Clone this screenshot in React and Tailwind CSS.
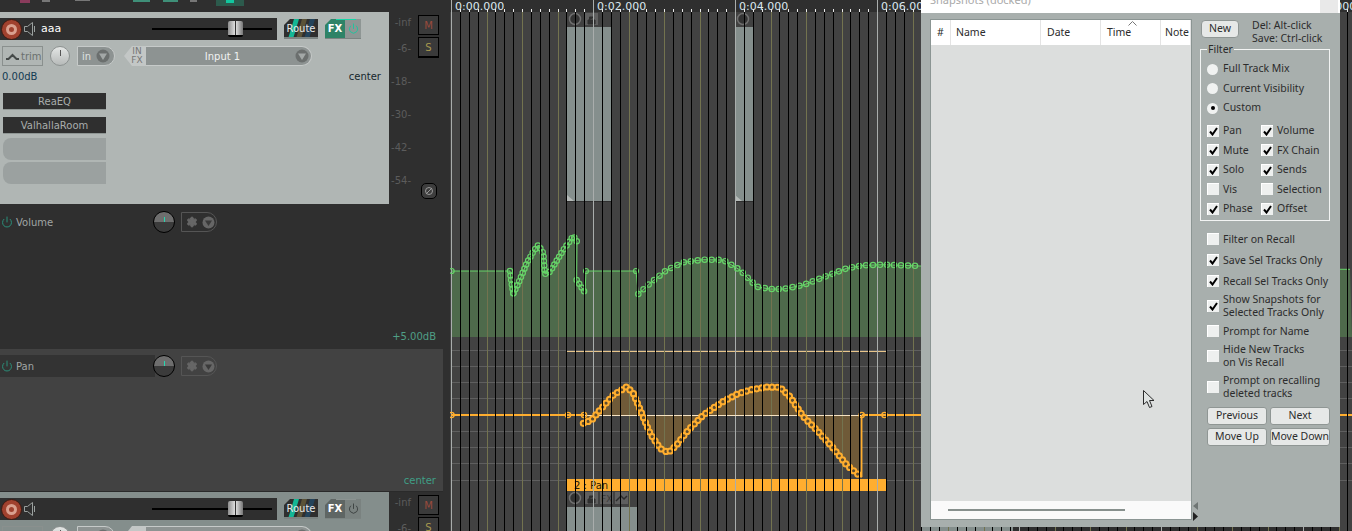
import React from "react";
import { Settings, Power } from "lucide-react";

const GRID = Array.from({ length: 103 }, (_, k) => ({ k, x: Math.floor(451.5 + k * 8.875) - 450 + 0.5 }));

// envelope points, read off the picture
const toVol = (p) => [p[0] / 3, 220 + p[1] / 3];
const toPan = (p) => [p[0] / 3, 340 + p[1] / 3];

const volRuns = [
  [[180, 153], [184, 185], [190, 220]],
  [[190, 220], [205, 190], [230, 130], [250, 95], [265, 75], [280, 100], [282, 130], [285, 162], [300, 155], [340, 90], [370, 48], [381, 65]],
  [[380, 180], [405, 218]],
  [[565, 222], [600, 190], [650, 150], [700, 127], [760, 119], [820, 120], [870, 150], [920, 200], [960, 207], [1000, 207], [1060, 195], [1130, 168], [1190, 145], [1240, 136], [1300, 134], [1410, 138]],
];
const volLine = [[5, 153], ...volRuns[0], ...volRuns[1], ...volRuns[2], [408, 153], [558, 153], ...volRuns[3], [2700, 148]].map(toVol);

const panCurve = [[400, 250], [425, 240], [450, 210], [490, 165], [530, 140], [550, 160], [575, 220], [600, 280], [630, 325], [655, 338], [680, 315], [715, 270], [760, 225], [815, 187], [860, 163], [900, 150], [950, 141], [990, 142], [1020, 170], [1060, 230], [1100, 270], [1150, 325], [1190, 375], [1235, 412]];

const spaced = (pts, gap) => {
  const out = [pts[0]];
  let left = gap;
  for (let i = 1; i < pts.length; i++) {
    const [x0, y0] = pts[i - 1];
    const [x1, y1] = pts[i];
    const len = Math.hypot(x1 - x0, y1 - y0);
    let d = left;
    while (d <= len) {
      out.push([x0 + ((x1 - x0) * d) / len, y0 + ((y1 - y0) * d) / len]);
      d += gap;
    }
    left = d - len;
  }
  return out;
};

const str = (pts) => pts.map((p) => p.join(",")).join(" ");
const panPts = panCurve.map(toPan);

const DropDot = ({ className }) => (
  <svg width="14" height="14" viewBox="0 0 14 14" className={className}>
    <circle cx="7" cy="7" r="6.5" fill="#6b6f6e" />
    <path d="M3 4.5h8L7 11z" fill="#a3a8a7" />
  </svg>
);

const Knob = ({ light }) =>
  light ? (
    <div className="w-[20px] h-[20px] rounded-full border border-[#8d9291] bg-linear-to-b from-[#e4e6e5] to-[#b6bab9] flex justify-center pt-[3px]">
      <div className="w-px h-[6px] bg-[#555]" />
    </div>
  ) : (
    <div className="w-[22px] h-[22px] rounded-full border border-black bg-linear-to-b from-[#6e6e6e] from-50% to-[#3b3b3b] to-50% flex justify-center pt-[5px] shrink-0">
      <div className="w-px h-[5px] bg-[#25d8b0]" />
    </div>
  );

const Fader = () => (
  <div className="absolute left-[152px] top-0 w-[120px] h-full flex items-center">
    <div className="w-full h-[2px] bg-black" />
    <div className="absolute left-[76px] top-[3px] w-[15px] h-[16px] rounded-[2px] bg-linear-to-r from-[#8e8e8e] via-[#e6e6e6] to-[#777] border-b-2 border-black flex justify-center">
      <div className="w-px h-full bg-[#333]" />
    </div>
  </div>
);

const Track = ({ name, panel, active, height, compact }) => (
  <div className={`flex shrink-0 ${height}`}>
    <div className={`w-[389px] pt-[6px] ${panel}`}>
      <div className="flex h-[22px]">
        <div className="relative w-[277px] h-full bg-[#2f2f2f]">
          <div className="absolute left-[1px] top-[1px] w-[21px] h-[21px] rounded-full bg-[#a0412e] border border-[#3c1a12] flex items-center justify-center">
            <div className="w-[11px] h-[11px] rounded-full border-[3px] border-[#d9a08f] bg-[#a0412e]" />
          </div>
          <svg width="12" height="14" viewBox="0 0 12 14" className="absolute left-[24px] top-[4px]">
            <path d="M.5 4.5h3l5-4v13l-5-4h-3zM10.5 4v6" fill="none" stroke="#9aa09e" />
          </svg>
          <span className="absolute left-[41px] top-[3px] text-[11px] leading-[16px] text-white font-['DejaVu_Sans',sans-serif]">{name}</span>
          <Fader />
        </div>
        <div className="relative ml-[7px] mt-[1px] w-[34px] h-[20px] bg-[#2f2f2f] border-b-2 border-[#7c8482] [clip-path:polygon(6px_0,100%_0,100%_100%,0_100%,0_6px)] overflow-hidden flex items-center justify-center">
          <svg width="34" height="20" viewBox="0 0 34 20" className="absolute left-0 top-0">
            <path d="M10 0h5l-6 20H4z" fill="#14b795" />
            <path d="M18 0h5l-6 20h-5z" fill="#5b5338" />
            <path d="M26 0h5l-6 20h-5z" fill="#24435a" />
          </svg>
          <span className="relative text-[10px] text-[#e8e8e8] font-['DejaVu_Sans',sans-serif]">Route</span>
        </div>
        <div className="relative ml-[7px] mt-[1px] w-[36px] h-[20px] flex border-b border-[#7c8482] [clip-path:polygon(6px_0,100%_0,100%_100%,0_100%,0_6px)] overflow-hidden">
          <div className={`w-[20px] h-full flex items-center justify-center text-[10px] font-bold text-white font-['DejaVu_Sans',sans-serif] ${active ? "bg-[#2e8367]" : "bg-[#5f6664]"}`}>FX</div>
          <div className={`flex-1 flex items-center justify-center ${active ? "bg-[#8e9694]" : "bg-[#7a8280]"}`}>
            <Power size={11} color={active ? "#19c79f" : "#3a3f3e"} />
          </div>
          <div className={`absolute left-[11px] top-0 w-[20px] h-px ${active ? "bg-[#18d6a8]" : "bg-[#8b9391]"}`} />
        </div>
      </div>
      <div className="flex items-center h-[20px] mt-[6px] font-['DejaVu_Sans',sans-serif]">
        <div className="ml-[2px] w-[41px] h-full border border-[#8a908e] flex items-center gap-[2px] pl-[3px] text-[10px] text-[#6a706e]">
          <svg width="13" height="7" viewBox="0 0 13 7"><path d="M0 6h2.5l4-4 4 4H13" fill="none" stroke="#454a49" strokeWidth="2" /></svg>
          {!compact && "trim"}
        </div>
        <div className="ml-[7px]"><Knob light /></div>
        <div className="ml-[7px] w-[38px] h-full bg-[#8d9392] border border-[#c6cac9] rounded-r-[10px] flex items-center justify-between px-[4px] text-[10px] text-[#dfe2e1]">
          {compact ? <span /> : "in"}
          <DropDot />
        </div>
        <div className="ml-[9px] w-[22px] h-full bg-[#c3c7c6] [clip-path:polygon(0_50%,8px_0,100%_0,100%_100%,8px_100%)] flex flex-col items-center pl-[4px] text-[9px] leading-[9px] text-[#777] pt-[1px]">
          {!compact && <span>IN</span>}
          {!compact && <span>FX</span>}
        </div>
        <div className="relative w-[166px] h-full bg-[#8d9392] border-y border-r border-[#c6cac9] rounded-r-[10px] flex items-center justify-center pr-[12px] text-[10px] text-[#f0f2f1]">
          {!compact && "Input 1"}
          <DropDot className="absolute right-[2px] top-[2px]" />
        </div>
      </div>
      {!compact && (
        <>
          <div className="flex justify-between h-[12px] mt-[5px] pl-[2px] pr-[8px] text-[10px] leading-[12px] font-['DejaVu_Sans',sans-serif]">
            <span className="text-[#123a52]">0.00dB</span>
            <span className="text-[#16262c]">center</span>
          </div>
          <div className="ml-[3px] mt-[10px] w-[103px] font-['DejaVu_Sans',sans-serif] text-[10px] text-[#a9adac]">
            <div className="h-[17px] bg-[#2f2f2f] border-b border-[#8f9694] flex items-center justify-center">ReaEQ</div>
            <div className="h-[17px] mt-[7px] bg-[#2f2f2f] border-b border-[#8f9694] flex items-center justify-center">ValhallaRoom</div>
            <div className="h-[22px] mt-[4px] bg-[#9ba1a0] rounded-l-[8px]" />
            <div className="h-[22px] mt-[2px] bg-[#9ba1a0] rounded-l-[8px]" />
          </div>
        </>
      )}
    </div>
    <div className="w-[61px] flex font-['DejaVu_Sans',sans-serif]">
      <div className="w-[22px] pt-[5px] flex flex-col items-end text-[10px] leading-[12px] text-[#5c5c5c]">
        <span className="h-[26px]">-inf</span>
        <span className="h-[33px]">-6-</span>
        {!compact && <span className="h-[33px]">-18-</span>}
        {!compact && <span className="h-[33px]">-30-</span>}
        {!compact && <span className="h-[33px]">-42-</span>}
        {!compact && <span>-54-</span>}
      </div>
      <div className="ml-[7px] pt-[3px] flex flex-col items-center w-[21px]">
        <div className="w-[21px] h-[20px] bg-[#3a3a3a] border border-black flex items-center justify-center text-[10px] text-[#9a4a3c]">M</div>
        <div className="w-[21px] h-[21px] mt-[2px] bg-[#3a3a3a] border border-black border-b-2 flex items-center justify-center text-[10px] text-[#a8984e]">S</div>
        <div className="mt-[125px] w-[16px] h-[16px] rounded-[5px] bg-[#3d3d3d] border border-black flex items-center justify-center">
          <svg width="10" height="10" viewBox="0 0 10 10"><circle cx="5" cy="5" r="3.5" fill="none" stroke="#999" /><path d="M2 8l6-6" stroke="#999" /></svg>
        </div>
      </div>
    </div>
  </div>
);

const LaneHead = ({ name, strip }) => (
  <div className="flex items-center h-[22px]">
    <div className={`w-[155px] h-full flex items-center pl-[1px] gap-[3px] ${strip}`}>
      <Power size={12} color="#2b8f7a" />
      <span className="text-[10px] text-[#a0a5a4] font-['DejaVu_Sans',sans-serif]">{name}</span>
    </div>
    <div className="-ml-[2px]"><Knob /></div>
    <div className="ml-[6px] w-[36px] h-[20px] border border-[#555] rounded-r-[10px] flex items-center justify-between pl-[4px] pr-[1px]">
      <Settings size={12} color="#666" fill="#666" />
      <svg width="13" height="13" viewBox="0 0 13 13"><circle cx="6.5" cy="6.5" r="6" fill="#666" /><path d="M3 4.5h7L6.5 10z" fill="#3a3a3a" /></svg>
    </div>
  </div>
);

const TrackPanel = () => (
  <div className="w-[450px] h-full shrink-0 flex flex-col bg-[#2f2f2f]">
    <div className="h-[12px] shrink-0 flex">
      <div className="ml-[20px] w-[10px] h-[3px] bg-[#8a3c5c]" />
      <div className="ml-[12px] w-[8px] h-[2px] bg-[#777]" />
      <div className="ml-[25px] w-[15px] h-[1px] bg-[#777]" />
      <div className="ml-[43px] w-[17px] h-[2px] bg-[#3f8f78]" />
      <div className="ml-[13px] w-[15px] h-[2px] bg-[#3f8f78]" />
      <div className="ml-[12px] w-[7px] h-[2px] bg-[#777]" />
      <div className="ml-[19px] w-[28px] h-[6px] bg-[#2c5a4c] flex justify-center">
        <div className="w-[8px] h-[3px] bg-[#12c79f]" />
      </div>
    </div>
    <Track name="aaa" panel="bg-[#b0b6b4]" active height="h-[192px]" />
    <div className="w-[443px] h-[145px] shrink-0 flex flex-col justify-between pt-[7px] pb-[6px] pr-[7px]">
      <LaneHead name="Volume" strip="" />
      <span className="self-end text-[10px] leading-[12px] text-[#4f9f86] font-['DejaVu_Sans',sans-serif]">+5.00dB</span>
    </div>
    <div className="w-[443px] h-[143px] shrink-0 bg-[#424242] flex flex-col justify-between pt-[6px] pb-[4px] pr-[7px] border-b border-[#2a2a2a]">
      <LaneHead name="Pan" strip="bg-[#333333]" />
      <span className="self-end text-[10px] leading-[12px] text-[#3f9f86] font-['DejaVu_Sans',sans-serif]">center</span>
    </div>
    <Track name="" panel="bg-[#848e8c]" height="h-[192px]" compact />
  </div>
);

const ItemHead = ({ x, y, w, lock, more }) => (
  <g>
    <rect x={x} y={y} width={w} height={15} fill="#414141" />
    <circle cx={x + 8} cy={y + 7} r={5.5} fill="#333" stroke="#6f6f6f" strokeWidth="1.5" />
    {lock && <rect x={x + 18} y={y + 1} width={13} height={12} fill="#5f5f5f" />}
    {lock && <path d={`M${x + 21} ${y + 12}v-4h7v4zM${x + 22.5} ${y + 8}v-3h4v1`} fill="#2f2f2f" stroke="#2f2f2f" />}
    {more && <rect x={x + 33} y={y + 1} width={13} height={12} fill="#5f5f5f" />}
    {more && <text x={x + 34} y={y + 11} fontSize="9" fill="#3a3a3a" fontFamily="DejaVu Sans">FX</text>}
    {more && <rect x={x + 48} y={y + 1} width={13} height={12} fill="#5f5f5f" />}
    {more && <path d={`M${x + 49} ${y + 10}l5-5 3 3 3-3`} fill="none" stroke="#2b2b2b" strokeWidth="1.5" />}
  </g>
);

const ArrangeArt = () => (
  <svg width="902" height="519" viewBox="0 12 902 519" className="block">
    <rect x="0" y="12" width="902" height="519" fill="#424242" />
    {[350, 366, 382, 398, 431, 447, 463, 480].map((y) => (
      <line key={y} x1="1" x2="902" y1={y + 0.5} y2={y + 0.5} stroke="#5f5f5f" shapeRendering="crispEdges" />
    ))}
    <ItemHead x={117} y={12} w={45} lock />
    <rect x="117" y="27" width="45" height="174" fill="#858f8d" />
    <path d="M117 195l7 6h-7z" fill="#b5bab8" />
    <rect x="117" y="201" width="45" height="1" fill="#2f2f2f" />
    <ItemHead x={285} y={12} w={19} />
    <rect x="285" y="27" width="19" height="174" fill="#858f8d" />
    <path d="M285 195l7 6h-7z" fill="#b5bab8" />
    <rect x="285" y="201" width="19" height="1" fill="#2f2f2f" />

    <polygon points={`1,337 ${str(volLine)} 902,337`} fill="#4e6a4b" />

    <polygon points={`${panPts[0][0]},415.5 ${str(panPts)} ${panPts[panPts.length - 1][0]},415.5`} fill="#6f5a38" />
    <rect x="117" y="479" width="319" height="12" fill="#ffae2f" />
    <line x1="117" x2="436" y1="351.5" y2="351.5" stroke="#e8c58a" shapeRendering="crispEdges" />
    <text x="124" y="489" fontSize="10" fill="#2a1a04" fontFamily="DejaVu Sans">2 : Pan</text>
    <ItemHead x={117} y={491} w={70} lock more />
    <rect x="117" y="507" width="70" height="24" fill="#858f8d" />
    <rect x="471" y="527" width="92" height="4" fill="#848e8c" />
    <rect x="563" y="527" width="327" height="4" fill="#2f2f2f" />

    {GRID.filter((g) => g.k % 4 === 0).map((g) => (
      <line key={g.k} x1={g.x} x2={g.x} y1="12" y2="531" stroke={g.k % 16 === 0 ? "#a9adac" : "#73734f"} shapeRendering="crispEdges" />
    ))}

    <polyline points={str(volLine)} fill="none" stroke="#66d468" />
    {[[5, 153], [408, 153], [558, 153]].map(toVol).map(([x, y], i) => (
      <circle key={i} cx={x} cy={y} r="2.5" fill="none" stroke="#66d468" strokeWidth="1.2" />
    ))}
    {volRuns.map((run, i) =>
      spaced(run.map(toVol), i === 3 ? 7 : 4.5).map(([x, y], j) => (
        <circle key={`${i}-${j}`} cx={x} cy={y} r="2.7" fill="none" stroke="#66d468" strokeWidth="1.2" />
      ))
    )}

    <line x1="1" x2="135" y1="415" y2="415" stroke="#ffae2f" strokeWidth="2" />
    <line x1="135" x2="412" y1="415.5" y2="415.5" stroke="#f6e2c2" />
    <line x1="412" x2="902" y1="415" y2="415" stroke="#ffae2f" strokeWidth="2" />
    <line x1="411.7" x2="411.7" y1="415" y2="477" stroke="#ffae2f" strokeWidth="1.5" />
    <polyline points={str(panPts)} fill="none" stroke="#ffae2f" strokeWidth="1.5" />
    {[[1.5, 415], [118, 415], [134, 415], [411.7, 415], [434.5, 415]].map(([x, y], i) => (
      <circle key={i} cx={x} cy={y} r="2.6" fill="none" stroke="#ffae2f" strokeWidth="1.4" />
    ))}
    {spaced(panPts, 5.2).map(([x, y], i) => (
      <circle key={i} cx={x} cy={y} r="2.6" fill="#5e4c2e" stroke="#ffae2f" strokeWidth="2" />
    ))}

    {GRID.filter((g) => g.k % 4 !== 0).map((g) => (
      <line key={g.k} x1={g.x} x2={g.x} y1="12" y2="531" stroke="#000" shapeRendering="crispEdges" />
    ))}
  </svg>
);

const Ruler = () => (
  <div className="relative h-[12px] bg-[#2f2f2f] flex text-[11px] leading-[14px] text-[#dbe7ee] font-['DejaVu_Sans',sans-serif] overflow-hidden">
    {["0:00.000", "0:02.000", "0:04.000", "0:06.000", "0:08.000", "0:10.000", "0:12.000"].map((t) => (
      <div key={t} className="w-[142px] shrink-0 pl-[5px]">{t}</div>
    ))}
    <svg width="902" height="12" className="absolute left-0 top-0">
      {GRID.map((g) => (
        <line key={g.k} x1={g.x} x2={g.x} y1={g.k % 16 === 0 ? 0 : 9} y2="12" stroke={g.k % 16 === 0 ? "#a9adac" : "#e8e8e8"} shapeRendering="crispEdges" />
      ))}
    </svg>
  </div>
);

const Box = ({ checked }) => (
  <div className="w-[12px] h-[12px] shrink-0 bg-[#eef0ef] border-t border-l border-white flex items-center justify-center">
    {checked && (
      <svg width="9" height="9" viewBox="0 0 9 9"><path d="M1 4.5l2.5 3L8 1" fill="none" stroke="#000" strokeWidth="2" /></svg>
    )}
  </div>
);

const Check = ({ label, checked, className = "" }) => (
  <div className={`flex items-center gap-[4px] whitespace-nowrap ${className}`}>
    <Box checked={checked} />
    <span className="leading-[13px]">{label}</span>
  </div>
);

const Radio = ({ label, on }) => (
  <div className="flex items-center gap-[5px] h-[14px]">
    <div className="w-[11px] h-[11px] rounded-full bg-[#f0f2f1] flex items-center justify-center">
      {on && <div className="w-[4px] h-[4px] rounded-full bg-black" />}
    </div>
    {label}
  </div>
);

const Btn = ({ children, className = "" }) => (
  <div className={`h-[18px] whitespace-nowrap bg-[#e6e8e7] border border-[#8f9694] rounded-[3px] flex items-center justify-center ${className}`}>{children}</div>
);

const columns = [
  ["#", "w-[20px] justify-center"],
  ["Name", "w-[90px] pl-[5px]"],
  ["Date", "w-[60px] pl-[6px]"],
  ["Time", "w-[60px] pl-[6px]"],
  ["Note", "flex-1 pl-[4px]"],
];

const SnapshotWindow = () => (
  <div className="absolute left-[471px] top-0 w-[419px] h-[527px] bg-[#a8afad] flex flex-col font-['Noto_Sans',sans-serif] text-[10.5px] text-[#2c2c2c]">
    <div className="h-[13px] shrink-0 flex bg-white overflow-hidden">
      <span className="ml-[9px] -mt-[7px] text-[11px] leading-[14px] text-[#a9a9a9]">Snapshots (docked)</span>
      <div className="ml-auto mr-[2px] w-[18px] h-full bg-[#e9e9e9]" />
    </div>
    <div className="flex pt-[6px] pl-[9px]">
      <div className="w-[262px] h-[501px] shrink-0 border border-[#8b9593] flex flex-col bg-[#dcdedd]">
        <div className="relative h-[25px] shrink-0 flex bg-white">
          {columns.map(([t, c]) => (
            <div key={t} className={`flex items-center border-r border-[#e4e4e4] ${c}`}>{t}</div>
          ))}
          <svg width="9" height="5" viewBox="0 0 9 5" className="absolute left-[197px] top-[1px]"><path d="M.5 4.5l4-4 4 4" fill="none" stroke="#777" /></svg>
        </div>
        <div className="flex-1" />
        <div className="h-[18px] shrink-0 bg-[#fafafa] flex items-center pl-[17px]">
          <div className="w-[177px] h-[2px] bg-[#87908d]" />
        </div>
      </div>
      <div className="relative w-[148px] pl-[8px]">
        <div className="flex pt-[1px] gap-[13px]">
          <Btn className="ml-[1px] w-[38px] rounded-[4px]">New</Btn>
          <div className="leading-[13px] -mt-[1px] whitespace-nowrap">Del: Alt-click<br />Save: Ctrl-click</div>
        </div>
        <div className="relative mt-[4px] w-[130px] h-[172px] border border-[#f2f4f3] pl-[6px] pt-[12px]">
          <span className="absolute left-[6px] -top-[7px] px-[1px] leading-[13px] bg-[#a8afad]">Filter</span>
          <div className="flex flex-col gap-[5.5px]">
            <Radio label="Full Track Mix" />
            <Radio label="Current Visibility" />
            <Radio label="Custom" on />
          </div>
          <div className="mt-[9px] grid grid-cols-[54px_1fr] gap-y-[6.5px]">
            <Check label="Pan" checked />
            <Check label="Volume" checked />
            <Check label="Mute" checked />
            <Check label="FX Chain" checked />
            <Check label="Solo" checked />
            <Check label="Sends" checked />
            <Check label="Vis" />
            <Check label="Selection" />
            <Check label="Phase" checked />
            <Check label="Offset" checked />
          </div>
        </div>
        <div className="mt-[11px] ml-[7px] flex flex-col">
          <Check label="Filter on Recall" className="h-[14px]" />
          <Check label="Save Sel Tracks Only" checked className="h-[14px] mt-[7px]" />
          <Check label="Recall Sel Tracks Only" checked className="h-[14px] mt-[7px]" />
          <Check label={<>Show Snapshots for<br />Selected Tracks Only</>} checked className="h-[26px] mt-[5px]" />
          <Check label="Prompt for Name" className="h-[14px] mt-[5px]" />
          <Check label={<>Hide New Tracks<br />on Vis Recall</>} className="h-[26px] mt-[5px]" />
          <Check label={<>Prompt on recalling<br />deleted tracks</>} className="h-[26px] mt-[5px]" />
          <div className="mt-[7px] grid grid-cols-[60px_60px] gap-x-[3px] gap-y-[3px]">
            <Btn>Previous</Btn>
            <Btn>Next</Btn>
            <Btn>Move Up</Btn>
            <Btn>Move Down</Btn>
          </div>
        </div>
        <svg width="7" height="19" viewBox="0 0 7 19" className="absolute left-0 top-[483px]">
          <path d="M6 0v8L1 4z" fill="#6f7674" />
          <path d="M1 10v9l5-4.5z" fill="#222" />
        </svg>
      </div>
    </div>
    <svg width="14" height="20" viewBox="0 0 14 20" className="absolute left-[221px] top-[389px]">
      <path d="M1.5 1.5v14l3.5-3 2.5 6 2.5-1-2.5-6h4.5z" fill="#dfe3e2" stroke="#2b2b2b" />
    </svg>
  </div>
);

const App = () => (
  <div className="w-[1352px] h-[531px] overflow-hidden flex bg-[#2f2f2f]">
    <TrackPanel />
    <div className="relative w-[902px] h-full shrink-0 overflow-hidden">
      <Ruler />
      <ArrangeArt />
      <SnapshotWindow />
    </div>
  </div>
);

export default App;
